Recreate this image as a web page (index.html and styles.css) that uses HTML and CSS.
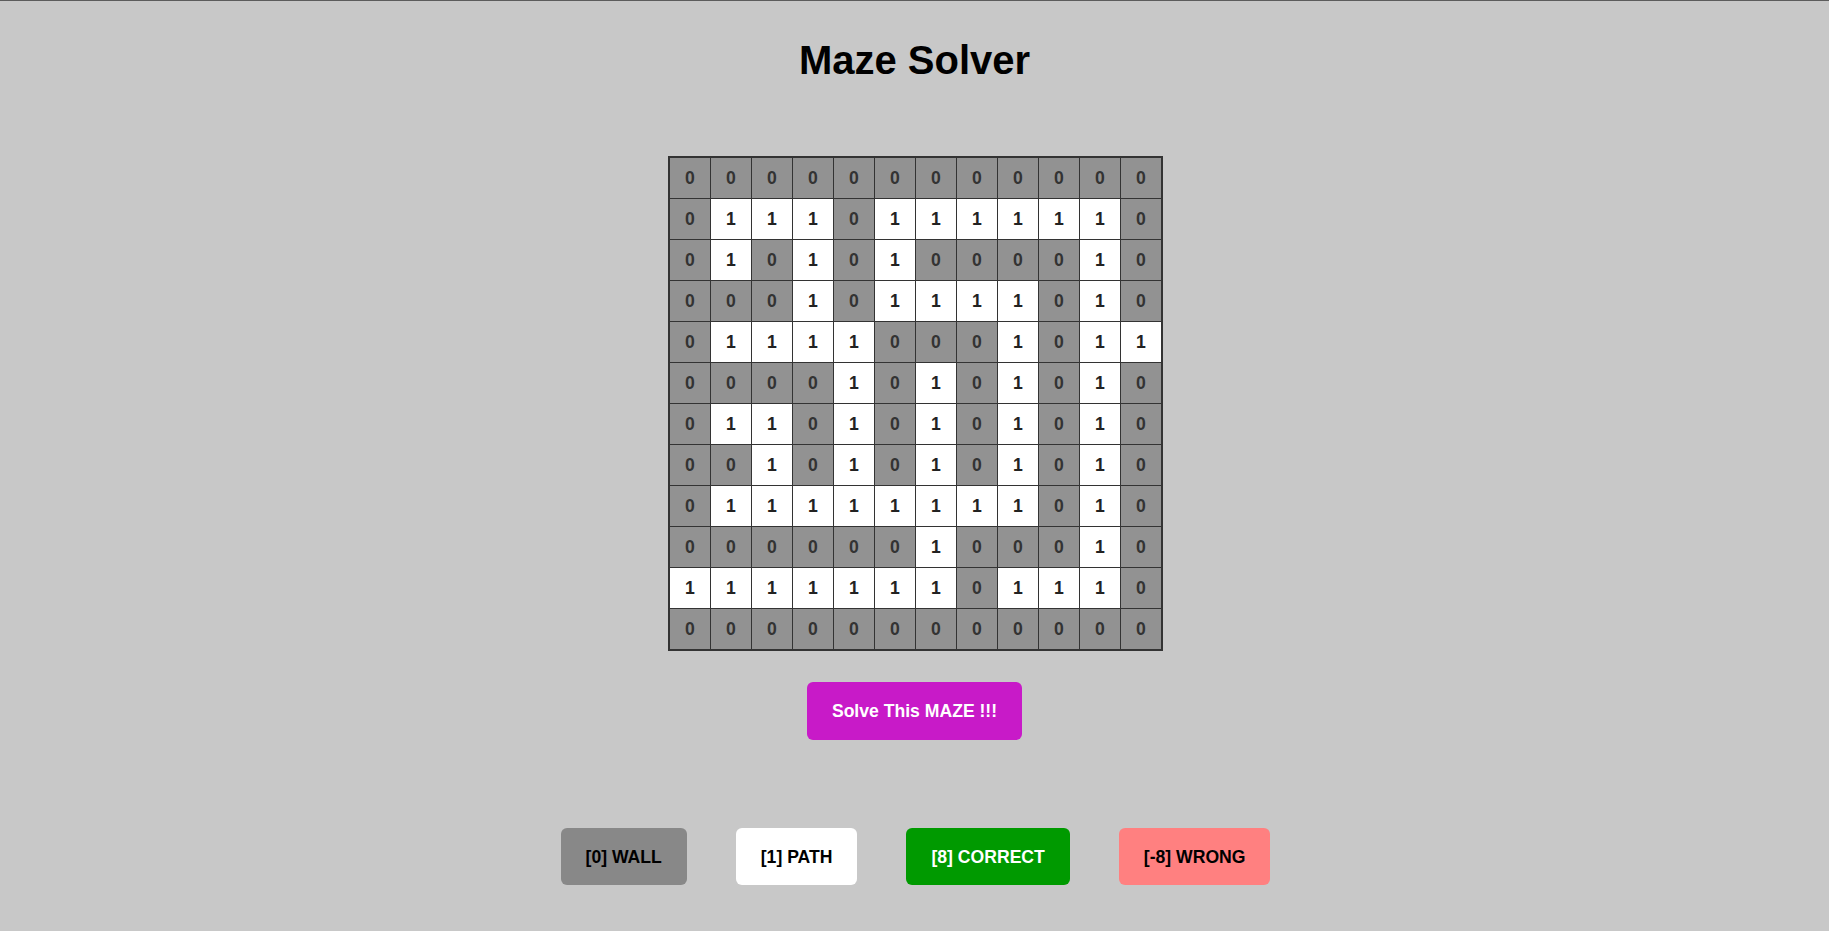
FILE: index.html
```html
<!DOCTYPE html>
<html lang="en">
<head>
<meta charset="utf-8">
<title>Maze Solver</title>
<link rel="stylesheet" href="styles.css">
</head>
<body>
<main class="app">
  <h1 class="title">Maze Solver</h1>
  <div class="maze">
    <div class="cell wall">0</div><div class="cell wall">0</div><div class="cell wall">0</div><div class="cell wall">0</div><div class="cell wall">0</div><div class="cell wall">0</div><div class="cell wall">0</div><div class="cell wall">0</div><div class="cell wall">0</div><div class="cell wall">0</div><div class="cell wall">0</div><div class="cell wall">0</div>
    <div class="cell wall">0</div><div class="cell path">1</div><div class="cell path">1</div><div class="cell path">1</div><div class="cell wall">0</div><div class="cell path">1</div><div class="cell path">1</div><div class="cell path">1</div><div class="cell path">1</div><div class="cell path">1</div><div class="cell path">1</div><div class="cell wall">0</div>
    <div class="cell wall">0</div><div class="cell path">1</div><div class="cell wall">0</div><div class="cell path">1</div><div class="cell wall">0</div><div class="cell path">1</div><div class="cell wall">0</div><div class="cell wall">0</div><div class="cell wall">0</div><div class="cell wall">0</div><div class="cell path">1</div><div class="cell wall">0</div>
    <div class="cell wall">0</div><div class="cell wall">0</div><div class="cell wall">0</div><div class="cell path">1</div><div class="cell wall">0</div><div class="cell path">1</div><div class="cell path">1</div><div class="cell path">1</div><div class="cell path">1</div><div class="cell wall">0</div><div class="cell path">1</div><div class="cell wall">0</div>
    <div class="cell wall">0</div><div class="cell path">1</div><div class="cell path">1</div><div class="cell path">1</div><div class="cell path">1</div><div class="cell wall">0</div><div class="cell wall">0</div><div class="cell wall">0</div><div class="cell path">1</div><div class="cell wall">0</div><div class="cell path">1</div><div class="cell path">1</div>
    <div class="cell wall">0</div><div class="cell wall">0</div><div class="cell wall">0</div><div class="cell wall">0</div><div class="cell path">1</div><div class="cell wall">0</div><div class="cell path">1</div><div class="cell wall">0</div><div class="cell path">1</div><div class="cell wall">0</div><div class="cell path">1</div><div class="cell wall">0</div>
    <div class="cell wall">0</div><div class="cell path">1</div><div class="cell path">1</div><div class="cell wall">0</div><div class="cell path">1</div><div class="cell wall">0</div><div class="cell path">1</div><div class="cell wall">0</div><div class="cell path">1</div><div class="cell wall">0</div><div class="cell path">1</div><div class="cell wall">0</div>
    <div class="cell wall">0</div><div class="cell wall">0</div><div class="cell path">1</div><div class="cell wall">0</div><div class="cell path">1</div><div class="cell wall">0</div><div class="cell path">1</div><div class="cell wall">0</div><div class="cell path">1</div><div class="cell wall">0</div><div class="cell path">1</div><div class="cell wall">0</div>
    <div class="cell wall">0</div><div class="cell path">1</div><div class="cell path">1</div><div class="cell path">1</div><div class="cell path">1</div><div class="cell path">1</div><div class="cell path">1</div><div class="cell path">1</div><div class="cell path">1</div><div class="cell wall">0</div><div class="cell path">1</div><div class="cell wall">0</div>
    <div class="cell wall">0</div><div class="cell wall">0</div><div class="cell wall">0</div><div class="cell wall">0</div><div class="cell wall">0</div><div class="cell wall">0</div><div class="cell path">1</div><div class="cell wall">0</div><div class="cell wall">0</div><div class="cell wall">0</div><div class="cell path">1</div><div class="cell wall">0</div>
    <div class="cell path">1</div><div class="cell path">1</div><div class="cell path">1</div><div class="cell path">1</div><div class="cell path">1</div><div class="cell path">1</div><div class="cell path">1</div><div class="cell wall">0</div><div class="cell path">1</div><div class="cell path">1</div><div class="cell path">1</div><div class="cell wall">0</div>
    <div class="cell wall">0</div><div class="cell wall">0</div><div class="cell wall">0</div><div class="cell wall">0</div><div class="cell wall">0</div><div class="cell wall">0</div><div class="cell wall">0</div><div class="cell wall">0</div><div class="cell wall">0</div><div class="cell wall">0</div><div class="cell wall">0</div><div class="cell wall">0</div>
  </div>
  <button class="solve-btn" type="button">Solve This MAZE !!!</button>
  <div class="legend">
    <div class="legend-item legend-wall">[0] WALL</div>
    <div class="legend-item legend-path">[1] PATH</div>
    <div class="legend-item legend-correct">[8] CORRECT</div>
    <div class="legend-item legend-wrong">[-8] WRONG</div>
  </div>
</main>
</body>
</html>
```
FILE: styles.css
```css
html, body {
  margin: 0;
  padding: 0;
}

body {
  background: #c8c8c8;
  border-top: 1px solid #5c5c5c;
  font-family: "Liberation Sans", Arial, sans-serif;
  min-height: 930px;
}

.app {
  display: flex;
  flex-direction: column;
  align-items: center;
}

.title {
  margin: 36px 0 73px;
  font-size: 40px;
  line-height: 46px;
  font-weight: bold;
  color: #000;
}

.maze {
  display: grid;
  grid-template-columns: repeat(12, 40px);
  grid-auto-rows: 40px;
  gap: 1px;
  margin-left: 2px;
  background: #333333;
  border: 2px solid #333333;
}

.cell {
  display: flex;
  align-items: center;
  justify-content: center;
  font-size: 17.6px;
  font-weight: bold;
  color: #333333;
}

.cell.wall {
  background: #929292;
}

.cell.path {
  background: #ffffff;
  color: #222222;
}

.solve-btn {
  margin-top: 31px;
  padding: 19px 25px;
  border: none;
  border-radius: 6px;
  background: #c81ac8;
  color: #ffffff;
  font-family: "Liberation Sans", Arial, sans-serif;
  font-size: 17.6px;
  line-height: 20px;
  font-weight: bold;
  cursor: pointer;
}

.legend {
  margin-top: 88px;
  display: flex;
  gap: 49px;
  margin-left: 2px;
}

.legend-item {
  padding: 18.5px 25px;
  border-radius: 6px;
  font-size: 17.6px;
  line-height: 20px;
  font-weight: bold;
  color: #000000;
}

.legend-wall {
  background: #888888;
}

.legend-path {
  background: #ffffff;
}

.legend-correct {
  background: #009a00;
  color: #ffffff;
}

.legend-wrong {
  background: #ff8080;
}
```
